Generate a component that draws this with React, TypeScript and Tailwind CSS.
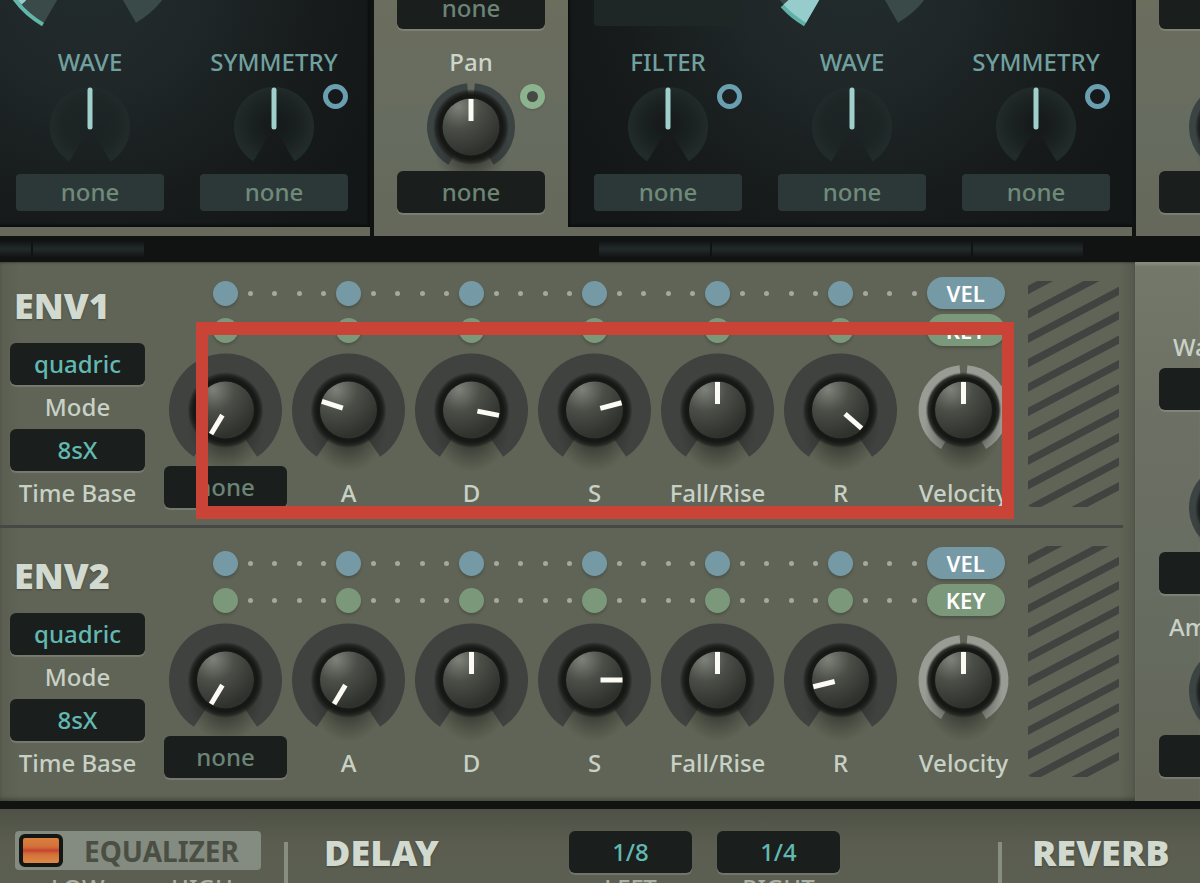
import { useState } from "react";
import type { ReactNode } from "react";

type Point = [number, number];

/** Angles run clockwise in degrees, with 0 pointing straight up. */
function polar(cx: number, cy: number, r: number, deg: number): Point {
  const a = (deg * Math.PI) / 180;
  return [cx + r * Math.sin(a), cy - r * Math.cos(a)];
}

function sector(cx: number, cy: number, inner: number, outer: number, from: number, to: number) {
  const [x0, y0] = polar(cx, cy, outer, from);
  const [x1, y1] = polar(cx, cy, outer, to);
  const [x2, y2] = polar(cx, cy, inner, to);
  const [x3, y3] = polar(cx, cy, inner, from);
  const large = to - from > 180 ? 1 : 0;
  return `M${x0} ${y0}A${outer} ${outer} 0 ${large} 1 ${x1} ${y1}L${x2} ${y2}A${inner} ${inner} 0 ${large} 0 ${x3} ${y3}Z`;
}

function Defs() {
  return (
    <svg width="0" height="0" className="absolute" aria-hidden="true">
      <defs>
        <radialGradient id="cap" cx="0.28" cy="0.14" r="0.85">
          <stop offset="0" stopColor="#7d8279" />
          <stop offset="0.45" stopColor="#4b4d47" />
          <stop offset="1" stopColor="#2f312d" />
        </radialGradient>
        <radialGradient id="well">
          <stop offset="0" stopColor="#131512" />
          <stop offset="0.84" stopColor="#161815" />
          <stop offset="0.92" stopColor="#1b1d1a" stopOpacity="0.75" />
          <stop offset="1" stopColor="#1b1d1a" stopOpacity="0" />
        </radialGradient>
        <radialGradient id="shade">
          <stop offset="0.4" stopColor="#1c1e1a" stopOpacity="0.6" />
          <stop offset="0.75" stopColor="#1c1e1a" stopOpacity="0.22" />
          <stop offset="1" stopColor="#1c1e1a" stopOpacity="0" />
        </radialGradient>
        <radialGradient id="fan">
          <stop offset="0.25" stopColor="#1d2525" stopOpacity="0" />
          <stop offset="0.7" stopColor="#1d2525" stopOpacity="0.8" />
          <stop offset="1" stopColor="#222b2b" />
        </radialGradient>
      </defs>
    </svg>
  );
}

function Turn({ name, value, onChange }: { name: string; value: number; onChange: (v: number) => void }) {
  return (
    <input
      type="range"
      min={-149}
      max={149}
      value={value}
      aria-label={name}
      onChange={(e) => onChange(Number(e.target.value))}
      className="absolute inset-0 h-full w-full cursor-pointer opacity-0"
    />
  );
}

function Cap({ cx, cy, angle }: { cx: number; cy: number; angle: number }) {
  return (
    <g>
      <ellipse cx={cx} cy={cy + 14} rx="39" ry="48" fill="url(#shade)" />
      <circle cx={cx} cy={cy} r="38" fill="url(#well)" />
      <circle cx={cx} cy={cy} r="28.5" fill="url(#cap)" />
      <line
        x1={cx}
        x2={cx}
        y1={cy - 28}
        y2={cy - 6}
        stroke="#fbfaf3"
        strokeWidth="5"
        transform={`rotate(${angle} ${cx} ${cy})`}
      />
    </g>
  );
}

function EnvKnob({ name, start, split }: { name: string; start: number; split?: boolean }) {
  const [angle, setAngle] = useState(start);
  return (
    <div className="relative h-[120px]">
      <svg viewBox="0 0 123 120" className="mx-auto h-[120px] w-[123px] overflow-visible" aria-hidden="true">
        {split ? (
          <g fill="#989c94">
            <path d={sector(61.5, 64, 36, 45, -150, -5)} />
            <path d={sector(61.5, 64, 36, 45, 5, 150)} />
          </g>
        ) : (
          <path d={sector(61.5, 64, 20, 56.5, -146, 146)} fill="#404240" />
        )}
        <Cap cx={61.5} cy={64} angle={angle} />
      </svg>
      <Turn name={name} value={angle} onChange={setAngle} />
    </div>
  );
}

function PanKnob({ name }: { name: string }) {
  const [angle, setAngle] = useState(0);
  return (
    <div className="relative h-[93px]">
      <svg viewBox="0 0 148 93" className="h-[93px] w-[148px] overflow-visible" aria-hidden="true">
        <g fill="#3b4343">
          <path d={sector(74, 49, 30, 44, -149, -5)} />
          <path d={sector(74, 49, 30, 44, 5, 149)} />
        </g>
        <Cap cx={74} cy={49} angle={angle} />
      </svg>
      <Turn name={name} value={angle} onChange={setAngle} />
    </div>
  );
}

function DarkKnob({ name }: { name: string }) {
  const [angle, setAngle] = useState(0);
  return (
    <div className="relative h-[96px]">
      <svg viewBox="0 0 148 96" className="h-[96px] w-[148px]" aria-hidden="true">
        <path d={sector(74, 49, 0, 40, -149, 149)} fill="url(#fan)" />
        <line
          x1="74"
          x2="74"
          y1="12"
          y2="49"
          stroke="#a0d0cc"
          strokeWidth="5"
          strokeLinecap="round"
          transform={`rotate(${angle} 74 49)`}
        />
      </svg>
      <Turn name={name} value={angle} onChange={setAngle} />
    </div>
  );
}

function Ring({ tone }: { tone: "blue" | "green" }) {
  return (
    <button
      type="button"
      aria-label="Modulation"
      className={
        tone === "blue"
          ? "absolute right-0 top-[84px] z-10 h-[25px] w-[25px] rounded-full border-5 border-[#6a9fb1]"
          : "absolute right-0 top-[84px] z-10 h-[25px] w-[25px] rounded-full border-[7px] border-[#8db28e] bg-[#454a45] shadow"
      }
    />
  );
}

const boxBase = "block w-full shrink-0 cursor-pointer appearance-none text-center text-2xl font-medium outline-none";

function Menu({ name, value, look }: { name: string; value: string; look: "value" | "none" | "panel" }) {
  const style =
    look === "value"
      ? "h-[42px] rounded-md bg-[#1a1e1d] text-[#62b9b1] shadow-[0_2px_1px_rgba(255,255,255,0.15)]"
      : look === "none"
        ? "h-[42px] rounded-md bg-[#1a1e1d] text-[#6b8475] shadow-[0_2px_1px_rgba(255,255,255,0.15)]"
        : "h-[37px] rounded bg-[#2c3837] pb-[2px] text-[#6f8a7a]";
  return (
    <select aria-label={name} defaultValue={value} className={`${boxBase} ${style}`}>
      <option>{value}</option>
    </select>
  );
}

function DarkColumn({ title, ring, children }: { title: string; ring?: boolean; children?: ReactNode }) {
  return (
    <div className="relative w-[148px] shrink-0">
      <div className="h-12">{children}</div>
      <div className="pb-[2px] text-center text-2xl font-medium leading-7 text-[#70a09f]">{title}</div>
      <DarkKnob name={title} />
      <Menu name={`${title} source`} value="none" look="panel" />
      {ring && <Ring tone="blue" />}
    </div>
  );
}

function OliveColumn({ title, value }: { title?: string; value?: string }) {
  return (
    <div className="relative w-[148px] shrink-0">
      <div className="flex h-12 flex-col justify-end pb-[19px]">
        <Menu name="Level source" value={value ?? ""} look="none" />
      </div>
      <div className="h-[30px] text-center text-2xl font-medium leading-7 text-[#ccd5ca]">{title}</div>
      <PanKnob name={title ?? "Pan"} />
      <div className="relative">
        <Menu name="Pan source" value={value ?? ""} look="none" />
      </div>
      {title && <Ring tone="green" />}
    </div>
  );
}

function DialEdge({ lit }: { lit?: boolean }) {
  return (
    <svg viewBox="0 0 148 28" className="h-7 w-[148px] overflow-visible" aria-hidden="true">
      <path d={sector(74, -57, 66, 92, 90, 150)} fill="#3a4a49" />
      <path d={sector(74, -57, 66, 92, 210, 270)} fill="#3a4a49" />
      {lit ? (
        <g>
          <path d={sector(74, -57, 66, 96, 210, 228)} fill="#5fb0a6" />
          <path d={sector(74, -57, 66, 92, 210, 228)} fill="#97cccc" />
        </g>
      ) : (
        <g>
          <path d={sector(74, -57, 92, 96, 210, 270)} fill="#62b6ab" />
          <path d={sector(74, -57, 86, 92, 228, 270)} fill="#97cccc" />
        </g>
      )}
    </svg>
  );
}

const darkA =
  "bg-[radial-gradient(circle_at_90px_-20px,#232c2d_0,#1f2728_110px,#171b1b_230px,#141717_320px)] shadow-[inset_-2px_-2px_2px_#0c0e0e]";
const darkB =
  "bg-[radial-gradient(circle_at_284px_-20px,#232c2d_0,#1f2728_110px,#171b1b_230px,#141717_320px)] shadow-[inset_2px_-2px_2px_#0c0e0e]";
const olive = "bg-[linear-gradient(#6b6d5d,#666c60_55%,#65685a)]";

function TopRow() {
  return (
    <div className="flex gap-1">
      <section className="w-[370px] shrink-0 bg-[#676a5b] pb-[9px]">
        <div className={`flex h-full gap-9 pb-4 pl-4 ${darkA}`}>
          <DarkColumn title="WAVE">
            <DialEdge />
          </DarkColumn>
          <DarkColumn title="SYMMETRY" ring />
        </div>
      </section>
      <section className={`flex flex-1 ${olive}`}>
        <div className="w-[194px] shrink-0 pb-[23px] pl-[23px]">
          <OliveColumn title="Pan" value="none" />
        </div>
        <div className="flex-1 pb-[9px]">
          <div className={`flex h-full gap-9 pb-4 pl-[26px] ${darkB}`}>
            <DarkColumn title="FILTER" ring>
              <div className="h-[26px] rounded-b bg-[#1f2626]" />
            </DarkColumn>
            <DarkColumn title="WAVE">
              <DialEdge lit />
            </DarkColumn>
            <DarkColumn title="SYMMETRY" ring />
          </div>
        </div>
      </section>
      <section className={`w-16 shrink-0 overflow-hidden pl-[23px] ${olive}`}>
        <OliveColumn />
      </section>
    </div>
  );
}

const slot = "h-4 bg-[linear-gradient(#111413,#23292a_50%,#111413)]";

function Rail() {
  return (
    <div className="flex h-[26px] items-center gap-[2px] bg-[#111312]">
      <div className={`w-[31px] ${slot}`} />
      <div className={`w-[111px] ${slot}`} />
      <div className="w-[451px]" />
      <div className={`w-[111px] ${slot}`} />
      <div className={`w-[259px] ${slot}`} />
      <div className={`w-[110px] ${slot}`} />
    </div>
  );
}

const stages = ["Delay", "A", "D", "S", "Fall/Rise", "R"];

function MiniDot({ hidden }: { hidden?: boolean }) {
  return (
    <span className="flex w-1/5 justify-center">
      {!hidden && <span className="h-[5px] w-[5px] rounded-full bg-[#a5a89f]" />}
    </span>
  );
}

function ModRow({ label, tone }: { label: string; tone: "blue" | "green" }) {
  const fill = tone === "blue" ? "bg-[#769aa5]" : "bg-[#7b987a]";
  return (
    <div className="grid h-8 grid-cols-7">
      {stages.map((stage, i) => (
        <div key={stage} className="flex items-center">
          <MiniDot hidden={i === 0} />
          <MiniDot hidden={i === 0} />
          <span className="flex w-1/5 justify-center">
            <button
              type="button"
              aria-label={`${label} to ${stage}`}
              className={`h-[25px] w-[25px] shrink-0 rounded-full shadow-[0_2px_3px_rgba(0,0,0,0.2)] ${fill}`}
            />
          </span>
          <MiniDot />
          <MiniDot />
        </div>
      ))}
      <div className="flex items-center">
        <MiniDot />
        <button
          type="button"
          className={`h-8 w-[78px] rounded-full pb-[2px] text-[22px] font-semibold text-white shadow-[0_2px_3px_rgba(0,0,0,0.2)] ${fill}`}
        >
          {label}
        </button>
      </div>
    </div>
  );
}

function Hatch({ lead }: { lead: number }) {
  const height = 226 + lead;
  return (
    <svg viewBox={`0 ${-lead} 91 ${height}`} width="91" height={height} className="block rounded-sm" aria-hidden="true">
      {Array.from({ length: 11 }, (_, k) => {
        const y = 9 + k * 24.4;
        return <line key={k} x1="-3" y1={y + 1.6} x2="94" y2={y - 49.5} stroke="#414340" strokeWidth="7.4" />;
      })}
    </svg>
  );
}

const legend = "text-center text-2xl font-medium text-[#c8d1c6]";

function Envelope({ name, angles, lead }: { name: string; angles: number[]; lead: number }) {
  return (
    <div className="flex pl-[10px] pr-4">
      <div className="w-[135px] shrink-0 pt-5">
        <h2 className="mb-[13px] pl-1 text-[36px] font-black leading-[48px] text-[#d2dacf] [text-shadow:0_1px_2px_rgba(0,0,0,0.3)]">
          {name}
        </h2>
        <Menu name={`${name} mode`} value="quadric" look="value" />
        <div className={`h-11 leading-[44px] ${legend}`}>Mode</div>
        <Menu name={`${name} time base`} value="8sX" look="value" />
        <div className={`h-11 whitespace-nowrap leading-[44px] ${legend}`}>Time Base</div>
      </div>
      <div className="ml-[19px] flex-1 pt-[15px]">
        <ModRow label="VEL" tone="blue" />
        <div className="h-[5px]" />
        <ModRow label="KEY" tone="green" />
        <div className="grid grid-cols-7">
          {stages.map((stage, i) => (
            <div key={stage}>
              <EnvKnob name={`${name} ${stage}`} start={angles[i]} />
              {i === 0 ? (
                <div className="relative">
                  <Menu name={`${name} source`} value="none" look="none" />
                </div>
              ) : (
                <div className={`pt-[13px] leading-7 ${legend}`}>{stage}</div>
              )}
            </div>
          ))}
          <div>
            <EnvKnob name={`${name} Velocity`} start={0} split />
            <div className={`pt-[13px] leading-7 ${legend}`}>Velocity</div>
          </div>
        </div>
      </div>
      <div className={lead ? "ml-[3px] pt-[14px]" : "ml-[3px] pt-[19px]"}>
        <Hatch lead={lead} />
      </div>
    </div>
  );
}

function EnvelopePanel() {
  return (
    <div className="flex h-[539px]">
      <section className="flex-1 bg-[linear-gradient(90deg,#5a5d50,#606456_20px,#606456_calc(100%-16px),#56594d)] shadow-[inset_0_2px_2px_-1px_rgba(0,0,0,0.3),inset_0_-4px_4px_-2px_rgba(0,0,0,0.3)]">
        <div className="relative h-[266px]">
          <Envelope name="ENV1" angles={[-149, -72, 101, 75, 0, 131]} lead={0} />
          <div className="absolute bottom-0 left-0 right-3 h-[3px] bg-[#454844]" />
          <div className="pointer-events-none absolute left-[196px] right-[121px] top-[60px] z-20 h-[197px] border-[12px] border-y-[13px] border-[#c94436]" />
        </div>
        <div className="pt-1">
          <Envelope name="ENV2" angles={[-149, -149, 0, 90, 0, -104]} lead={5} />
        </div>
      </section>
      <section className="w-[65px] shrink-0 overflow-hidden bg-[linear-gradient(#74786a,#6c7064_30%,#666b60_70%,#626557)] pl-6 shadow-[inset_0_4px_3px_-1px_rgba(255,255,255,0.15)]">
        <div className="w-[148px]">
          <div className="pl-[14px] pt-[70px] text-2xl font-medium leading-[30px] text-[#c8d1c6]">Wa</div>
          <div className="h-[6px]" />
          <Menu name="Wave select" value="" look="none" />
          <div className="h-[49px]" />
          <PanKnob name="Rate" />
          <div className="relative">
            <Menu name="Rate source" value="" look="none" />
          </div>
          <div className="pl-[10px] pt-[18px] text-2xl font-medium leading-[30px] text-[#c8d1c6]">Am</div>
          <PanKnob name="Depth" />
          <div className="relative">
            <Menu name="Depth source" value="" look="none" />
          </div>
        </div>
      </section>
    </div>
  );
}

const title = "text-[36px] font-black leading-[44px] text-[#d2dacf] [text-shadow:0_1px_2px_rgba(0,0,0,0.3)]";
const small = "text-2xl font-medium leading-7 text-[#a9afa1]";

function EffectsRow() {
  return (
    <div className="flex bg-[linear-gradient(#4f5146,#5a5d50_36px,#5c6053)] pl-[15px] pt-[22px]">
      <section className="w-[246px]">
        <button
          type="button"
          className="flex h-[39px] w-full items-center rounded bg-[#848b80] pl-1 text-left text-[28px] font-bold text-[#4b4e43]"
        >
          <span className="h-[33px] w-11 rounded-md border-4 border-[#141614] bg-[linear-gradient(#d9813f,#d3703a_35%,#c3462f_50%,#d3703a_65%,#dc8a44)]" />
          <span className="pl-[21px]">EQUALIZER</span>
        </button>
        <div className={`flex pl-[36px] pt-1 ${small}`}>
          <span className="w-[120px]">LOW</span>
          <span>HIGH</span>
        </div>
      </section>
      <div className="ml-[23px] mt-[11px] w-1 bg-[#898e83]" />
      <section className="flex flex-1 gap-[25px] pl-[36px]">
        <h2 className={`w-[220px] ${title}`}>DELAY</h2>
        <div className="w-[123px]">
          <Menu name="Delay left" value="1/8" look="value" />
          <div className={`pt-[1px] text-center ${small}`}>LEFT</div>
        </div>
        <div className="w-[123px]">
          <Menu name="Delay right" value="1/4" look="value" />
          <div className={`pt-[1px] text-center ${small}`}>RIGHT</div>
        </div>
      </section>
      <div className="mt-[11px] w-1 bg-[#898e83]" />
      <section className="w-[198px] pl-[30px]">
        <h2 className={title}>REVERB</h2>
      </section>
    </div>
  );
}

export default function App() {
  return (
    <main className="h-screen overflow-hidden bg-[#111312] font-['Noto_Sans',sans-serif]">
      <Defs />
      <TopRow />
      <Rail />
      <EnvelopePanel />
      <div className="h-2 bg-[#111312]" />
      <EffectsRow />
    </main>
  );
}
